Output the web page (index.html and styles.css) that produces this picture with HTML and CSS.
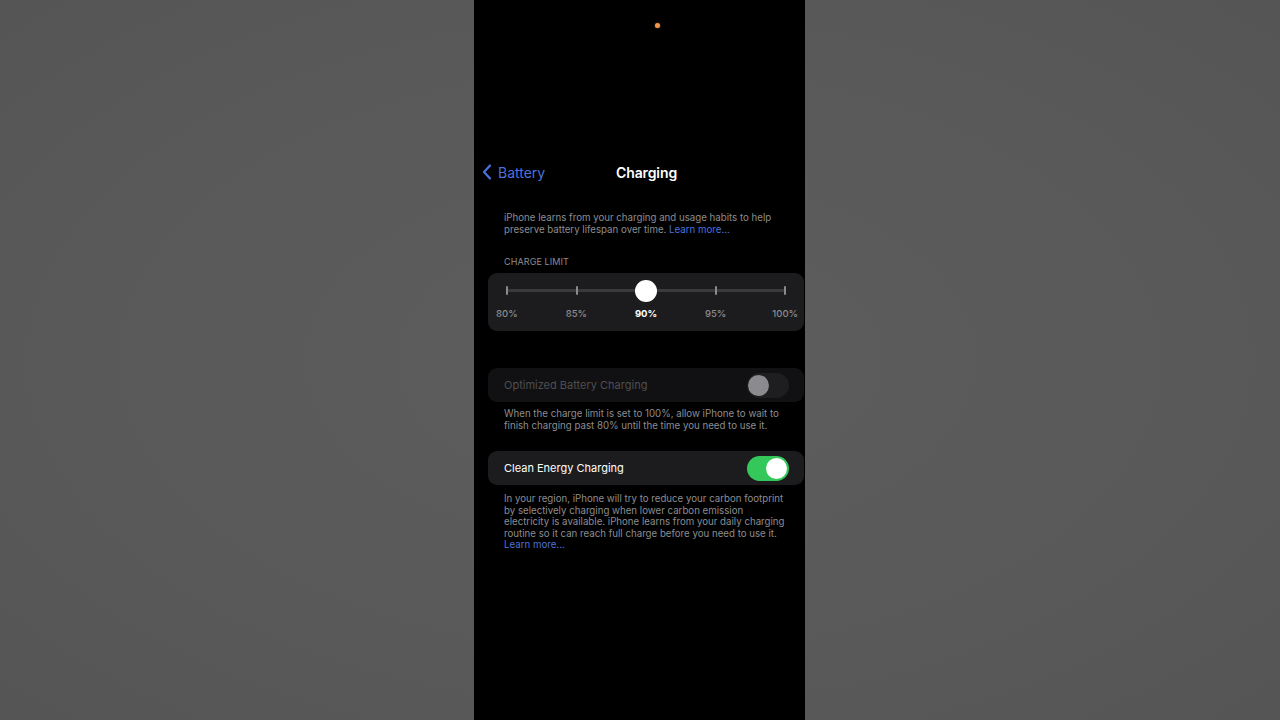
FILE: index.html
```html
<!DOCTYPE html>
<html>
<head>
<meta charset="utf-8">
<link rel="stylesheet" href="styles.css">
</head>
<body>
<div class="phone">
  <span class="cam-dot"></span>
  <div class="screen">
    <div class="nav">
      <div class="back">
        <svg class="chev" width="10" height="16" viewBox="0 0 10 16"><path d="M8 1.5 L2 8 L8 14.5" fill="none" stroke="currentColor" stroke-width="2.2" stroke-linecap="round" stroke-linejoin="round"/></svg>
        <span>Battery</span>
      </div>
      <div class="title">Charging</div>
      <div></div>
    </div>

    <p class="desc first">iPhone learns from your charging and usage habits to help<br>preserve battery lifespan over time. <span class="link">Learn more...</span></p>

    <div class="section-label">CHARGE LIMIT</div>
    <div class="card slider-card">
      <div class="track">
        <span class="tick"></span><span class="tick"></span><span class="tick"></span><span class="tick"></span><span class="tick"></span>
        <span class="thumb"></span>
      </div>
      <div class="labels">
        <span>80%</span><span>85%</span><span class="on">90%</span><span>95%</span><span>100%</span>
      </div>
    </div>

    <div class="card row disabled">
      <span class="row-label">Optimized Battery Charging</span>
      <span class="toggle off"><span class="knob"></span></span>
    </div>
    <p class="desc after-row">When the charge limit is set to 100%, allow iPhone to wait to<br>finish charging past 80% until the time you need to use it.</p>

    <div class="card row clean">
      <span class="row-label">Clean Energy Charging</span>
      <span class="toggle on"><span class="knob"></span></span>
    </div>
    <p class="desc after-clean">In your region, iPhone will try to reduce your carbon footprint<br>by selectively charging when lower carbon emission<br>electricity is available. iPhone learns from your daily charging<br>routine so it can reach full charge before you need to use it.<br><span class="link">Learn more...</span></p>
  </div>
</div>
</body>
</html>
```
FILE: styles.css
```css
html, body {
  margin: 0;
  padding: 0;
  height: 100%;
}
body {
  background: radial-gradient(ellipse at center, #5e5e5e 0%, #585858 70%, #555 100%);
  display: flex;
  justify-content: center;
  font-family: Inter, "Noto Sans", "Liberation Sans", sans-serif;
  overflow: hidden;
}
.phone {
  width: 331px;
  height: 720px;
  background: #000;
  position: relative;
  overflow: hidden;
  margin-left: -1px;
}
.cam-dot {
  position: absolute;
  left: 181px;
  top: 23px;
  width: 5px;
  height: 5px;
  border-radius: 50%;
  background: #f0964a;
  box-shadow: 0 0 2px rgba(240, 150, 74, 0.6);
}
.screen {
  width: 344px;
  padding-top: 157px;
}
.nav {
  height: 30px;
  display: grid;
  grid-template-columns: 1fr auto 1fr;
  align-items: center;
}
.back {
  display: flex;
  align-items: center;
  gap: 6px;
  padding-left: 8px;
  color: #4a72dc;
  font-size: 14px;
}
.chev {
  display: block;
}
.title {
  color: #fff;
  font-size: 14px;
  font-weight: 600;
  letter-spacing: -0.1px;
  padding-left: 1px;
}
.desc {
  margin: 0;
  padding: 0 30px;
  font-size: 9.7px;
  line-height: 11.5px;
  color: #8c8c90;
  white-space: nowrap;
}
.desc.first {
  margin-top: 25px;
}
.desc.after-row {
  margin-top: 6px;
  line-height: 12px;
}
.desc.after-clean {
  margin-top: 8px;
}
.link {
  color: #4a72dc;
}
.section-label {
  margin: 21px 0 0;
  padding: 0 30px;
  font-size: 9px;
  line-height: 12px;
  color: #8c8c90;
  letter-spacing: 0.1px;
}
.card {
  margin: 0 14px;
  background: #1c1c1e;
  border-radius: 9px;
}
.slider-card {
  margin-top: 5px;
  height: 58px;
  position: relative;
  overflow: visible;
}
.track {
  position: relative;
  top: 16px;
  margin: 0 18px 0 18px;
  height: 3px;
  background: #3a3a3c;
  border-radius: 2px;
  display: flex;
  justify-content: space-between;
  align-items: center;
}
.tick {
  width: 2px;
  height: 9px;
  background: #8a8a8e;
  border-radius: 1px;
}
.thumb {
  position: absolute;
  left: 50%;
  top: 50%;
  width: 22px;
  height: 22px;
  margin: -11px 0 0 -11px;
  border-radius: 50%;
  background: #fff;
}
.labels {
  position: relative;
  top: 32px;
  margin-left: -16px;
  width: 348px;
  display: grid;
  grid-template-columns: repeat(5, 1fr);
  text-align: center;
  font-size: 9.5px;
  line-height: 12px;
  color: #8c8c90;
  font-weight: 500;
}
.labels .on {
  color: #fff;
  font-weight: 700;
}
.row {
  height: 34px;
  display: flex;
  align-items: center;
  justify-content: space-between;
  padding: 0 15px 0 16px;
}
.row-label {
  font-size: 11px;
  color: #fff;
}
.disabled {
  margin-top: 37px;
  background: #111113;
}
.disabled .row-label {
  color: #4e4e52;
}
.clean {
  margin-top: 19px;
}
.toggle {
  width: 42px;
  height: 25px;
  border-radius: 13px;
  position: relative;
  display: block;
}
.toggle .knob {
  position: absolute;
  top: 2px;
  width: 21px;
  height: 21px;
  border-radius: 50%;
}
.toggle.off {
  background: #1e1e20;
}
.toggle.off .knob {
  left: 1px;
  background: #8a8a8f;
}
.toggle.on {
  background: #34c759;
}
.toggle.on .knob {
  right: 2px;
  background: #fff;
}
```
